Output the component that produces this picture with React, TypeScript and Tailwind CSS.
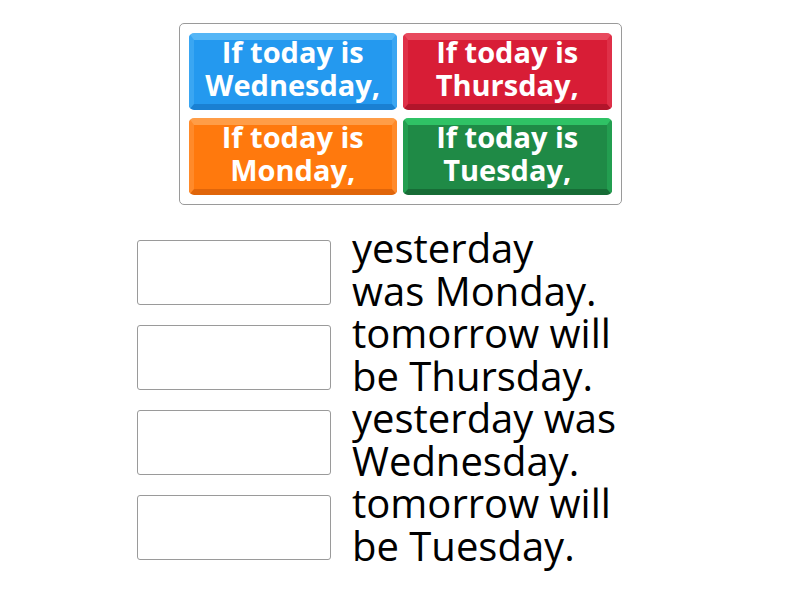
const tiles = [
  {
    day: "Wednesday,",
    cls: "bg-[#2499ef] border-t-[#55b6f6] border-x-[#3aa6f2] border-b-[#1a80d2]",
  },
  {
    day: "Thursday,",
    cls: "bg-[#d81d36] border-t-[#e84a5e] border-x-[#df3048] border-b-[#b2152b]",
  },
  {
    day: "Monday,",
    cls: "bg-[#ff790d] border-t-[#ff9d47] border-x-[#ff8a2a] border-b-[#e0650a]",
  },
  {
    day: "Tuesday,",
    cls: "bg-[#1f8a46] border-t-[#2fc265] border-x-[#239e50] border-b-[#176c36]",
  },
];

const answers = [
  ["yesterday", "was Monday."],
  ["tomorrow will", "be Thursday."],
  ["yesterday was", "Wednesday."],
  ["tomorrow will", "be Tuesday."],
];

export default function App() {
  return (
    <div className="w-[800px] h-[600px] bg-white font-['Open_Sans',sans-serif] overflow-hidden">
      <div className="flex justify-center pt-[23px]">
        <div className="w-[443px] rounded-[5px] border border-[#9a9a9a] p-[9px] grid grid-cols-2 gap-x-[6px] gap-y-[8px]">
          {tiles.map((t) => (
            <div
              key={t.day}
              className={`h-[77px] rounded-[5px] border-t-[7px] border-x-[5px] border-b-[6px] pb-[9px] flex flex-col items-center justify-center text-white font-bold text-[29px] leading-[33px] ${t.cls}`}
            >
              <span>If today is</span>
              <span>{t.day}</span>
            </div>
          ))}
        </div>
      </div>

      <div className="pl-[137px] pt-[25px] flex flex-col">
        {answers.map((a, i) => (
          <div key={i} className="h-[85px] flex items-center gap-[21px]">
            <div className="w-[194px] h-[65px] shrink-0 rounded-[3px] border border-[#9a9a9a] bg-white" />
            <div className="pb-[7px] text-[40px] leading-[43px] text-black whitespace-nowrap">
              <div>{a[0]}</div>
              <div>{a[1]}</div>
            </div>
          </div>
        ))}
      </div>
    </div>
  );
}
